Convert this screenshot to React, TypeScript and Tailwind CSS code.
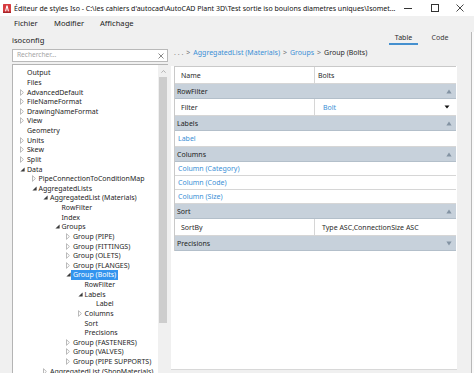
import React from 'react';

type Node = { l: number; t: string; s?: 'c' | 'e'; sel?: boolean };

const nodes: Node[] = [
  { l: 0, t: 'Output' },
  { l: 0, t: 'Files' },
  { l: 0, t: 'AdvancedDefault', s: 'c' },
  { l: 0, t: 'FileNameFormat', s: 'c' },
  { l: 0, t: 'DrawingNameFormat', s: 'c' },
  { l: 0, t: 'View', s: 'c' },
  { l: 0, t: 'Geometry' },
  { l: 0, t: 'Units', s: 'c' },
  { l: 0, t: 'Skew', s: 'c' },
  { l: 0, t: 'Split', s: 'c' },
  { l: 0, t: 'Data', s: 'e' },
  { l: 1, t: 'PipeConnectionToConditionMap', s: 'c' },
  { l: 1, t: 'AggregatedLists', s: 'e' },
  { l: 2, t: 'AggregatedList (Materials)', s: 'e' },
  { l: 3, t: 'RowFilter' },
  { l: 3, t: 'Index' },
  { l: 3, t: 'Groups', s: 'e' },
  { l: 4, t: 'Group (PIPE)', s: 'c' },
  { l: 4, t: 'Group (FITTINGS)', s: 'c' },
  { l: 4, t: 'Group (OLETS)', s: 'c' },
  { l: 4, t: 'Group (FLANGES)', s: 'c' },
  { l: 4, t: 'Group (Bolts)', s: 'e', sel: true },
  { l: 5, t: 'RowFilter' },
  { l: 5, t: 'Labels', s: 'e' },
  { l: 6, t: 'Label' },
  { l: 5, t: 'Columns', s: 'c' },
  { l: 5, t: 'Sort' },
  { l: 5, t: 'Precisions' },
  { l: 4, t: 'Group (FASTENERS)', s: 'c' },
  { l: 4, t: 'Group (VALVES)', s: 'c' },
  { l: 4, t: 'Group (PIPE SUPPORTS)', s: 'c' },
  { l: 2, t: 'AggregatedList (ShopMaterials)', s: 'c' },
];

function Arrow({ s }: { s?: 'c' | 'e' }) {
  if (s === 'c')
    return (
      <svg width="4" height="7" viewBox="0 0 4 7">
        <path d="M0.5 0.7 L3.4 3.5 L0.5 6.3 Z" fill="none" stroke="#a8a8a8" strokeWidth="0.8" />
      </svg>
    );
  if (s === 'e')
    return (
      <svg width="5" height="5" viewBox="0 0 5 5">
        <path d="M4.6 0.4 L4.6 4.6 L0.4 4.6 Z" fill="#3c3c3c" />
      </svg>
    );
  return null;
}

function Up() {
  return (
    <svg width="6" height="5" viewBox="0 0 6 5">
      <path d="M3 0.5 L5.6 4.5 L0.4 4.5 Z" fill="#8393a3" />
    </svg>
  );
}
function Down() {
  return (
    <svg width="6" height="5" viewBox="0 0 6 5">
      <path d="M0.4 0.5 L5.6 0.5 L3 4.5 Z" fill="#8393a3" />
    </svg>
  );
}

function Header({ t, down }: { t: string; down?: boolean }) {
  return (
    <div className="h-[15px] flex items-center justify-between bg-[#c7d1db] border-b border-[#b3bfca] pl-[2px] pr-[4px] text-[#1e1e1e]">
      <span>{t}</span>
      {down ? <Down /> : <Up />}
    </div>
  );
}

function Pair({ k, v, h, vcls, drop }: { k: string; v: string; h: string; vcls?: string; drop?: boolean }) {
  return (
    <div className={`${h} flex bg-white border-b border-[#d6d6d6]`}>
      <div className="w-[140px] border-r border-[#d6d6d6] flex items-center pl-[6px] text-[#2a2a2a]">{k}</div>
      <div className={`flex-1 flex items-center justify-between pr-[6px] ${vcls ?? 'pl-[3px] text-[#2a2a2a]'}`}>
        <span>{v}</span>
        {drop && (
          <svg width="6" height="4" viewBox="0 0 6 4">
            <path d="M0.5 0.5 L5.5 0.5 L3 3.5 Z" fill="#111" />
          </svg>
        )}
      </div>
    </div>
  );
}

function Link({ t }: { t: string }) {
  return (
    <div className="h-[14px] flex items-center bg-white border-b border-[#d6d6d6] pl-[3px] text-[#3a8fd6]">{t}</div>
  );
}

export default function App() {
  return (
    <div className="w-[474px] h-[373px] overflow-hidden bg-[#f0f0f0] font-['Noto_Sans',sans-serif] text-[7px] leading-none text-[#1a1a1a] flex flex-col">
      {/* title bar */}
      <div className="h-[16px] bg-white flex items-center shrink-0">
        <div className="w-[15px] flex justify-center">
          <svg width="8" height="9" viewBox="0 0 8 9">
            <rect x="0" y="0" width="8" height="9" rx="0.6" fill="#d63b3f" />
            <path d="M2 7.5 L3.4 1.6 L4.6 1.6 L6 7.5 L4.9 7.5 L4 3.6 L3.1 7.5 Z" fill="#fff" />
            <rect x="0" y="7.6" width="8" height="1.4" fill="#a8242a" />
          </svg>
        </div>
        <span className="whitespace-nowrap text-[#111]">
          Éditeur de styles Iso - C:\les cahiers d'autocad\AutoCAD Plant 3D\Test sortie iso boulons diametres uniques\Isomet...
        </span>
        <div className="flex-1" />
        <div className="w-[28px] flex justify-center">
          <div className="w-[8px] h-px bg-[#333]" />
        </div>
        <div className="w-[28px] flex justify-center">
          <div className="w-[8px] h-[8px] border border-[#333]" />
        </div>
        <div className="w-[28px] flex justify-center pr-[2px]">
          <svg width="8" height="8" viewBox="0 0 8 8">
            <path d="M0.5 0.5 L7.5 7.5 M7.5 0.5 L0.5 7.5" stroke="#333" strokeWidth="0.9" />
          </svg>
        </div>
      </div>

      {/* menu */}
      <div className="h-[16px] flex items-center pl-[14px] text-[7.6px] text-[#222] shrink-0">
        <span className="w-[40px]">Fichier</span>
        <span className="w-[46px]">Modifier</span>
        <span>Affichage</span>
      </div>

      {/* body */}
      <div className="flex flex-1 min-h-0">
        {/* left */}
        <div className="w-[168px] pl-[12px] flex flex-col shrink-0">
          <div className="h-[17px] flex items-center text-[7.6px] text-[#222]">isoconfig</div>
          <div className="h-[13px] bg-white border border-[#b9b9b9] flex items-center justify-between pl-[4px] pr-[3px]">
            <span className="text-[#a4a4a4] text-[6.6px]">Rechercher...</span>
            <svg width="6" height="6" viewBox="0 0 6 6">
              <path d="M0.5 0.5 L5.5 5.5 M5.5 0.5 L0.5 5.5" stroke="#6b6b6b" strokeWidth="0.8" />
            </svg>
          </div>
          <div className="mt-[2px] flex-1 bg-white border-l border-t border-[#b4b4b4] flex min-h-0 overflow-hidden">
            <div className="flex-1 pt-[3px] overflow-hidden">
              {nodes.map((n, i) => (
                <div key={i} className="h-[9.63px] flex items-center whitespace-nowrap" style={{ paddingLeft: 7 + n.l * 11.5 }}>
                  <div className="w-[7px] shrink-0 flex items-center">
                    <Arrow s={n.s} />
                  </div>
                  {n.sel ? (
                    <span className="bg-[#3394ee] text-white px-[2px] ml-[-2px] h-[9.5px] flex items-center">{n.t}</span>
                  ) : (
                    <span className="text-[#1e1e1e]">{n.t}</span>
                  )}
                </div>
              ))}
            </div>
            <div className="w-[10px] bg-[#f0f0f0] flex flex-col items-center shrink-0">
              <div className="h-[12px] flex items-center justify-center">
                <svg width="5" height="3" viewBox="0 0 5 3">
                  <path d="M0.4 2.7 L2.5 0.5 L4.6 2.7" fill="none" stroke="#a3a3a3" strokeWidth="0.8" />
                </svg>
              </div>
              <div className="w-[8px] h-[246px] bg-[#cdcdcd]" />
            </div>
          </div>
        </div>

        {/* right */}
        <div className="w-[303px] flex flex-col pl-[2px]">
          <div className="h-[13px] flex justify-end pr-[16px]">
            <div className="w-[29px] border-b-2 border-[#4590cf] flex items-center justify-center text-[#2b2b2b]">Table</div>
            <div className="w-[7px]" />
            <div className="w-[30px] flex items-center justify-center text-[#3a3a3a] pb-[2px]">Code</div>
          </div>
          <div className="h-[15px] flex items-center pl-[4px] whitespace-nowrap">
            <span className="text-[#8a8a8a]">. . .</span>
            <span className="text-[#777] mx-[3px]">&gt;</span>
            <span className="text-[#3a8fd6]">AggregatedList (Materials)</span>
            <span className="text-[#777] mx-[3px]">&gt;</span>
            <span className="text-[#3a8fd6]">Groups</span>
            <span className="text-[#777] mx-[3px]">&gt;</span>
            <span className="text-[#2a2a2a]">Group (Bolts)</span>
          </div>
          <div className="mt-[6px] ml-[1px] mr-[14px] h-[304px] bg-white border-b border-[#d8d8d8] pl-[3px] pr-[1px]">
            <div className="border-t border-l border-[#c9c9c9]">
              <Pair k="Name" v="Bolts" h="h-[17px]" />
              <Header t="RowFilter" />
              <Pair k="Filter" v="Bolt" h="h-[17px]" vcls="pl-[8px] text-[#3a8fd6]" drop />
              <Header t="Labels" />
              <div className="h-[16px] flex items-center bg-white border-b border-[#d6d6d6] pl-[3px] text-[#3a8fd6]">Label</div>
              <Header t="Columns" />
              <Link t="Column (Category)" />
              <Link t="Column (Code)" />
              <Link t="Column (Size)" />
              <Header t="Sort" />
              <Pair k="SortBy" v="Type ASC,ConnectionSize ASC" h="h-[17px]" vcls="pl-[7px] text-[#2a2a2a]" />
              <Header t="Precisions" down />
            </div>
          </div>
        </div>
        <div className="w-px bg-[#b8b8b8]" />
        <div className="flex-1 bg-[#fafafa]" />
      </div>
    </div>
  );
}
